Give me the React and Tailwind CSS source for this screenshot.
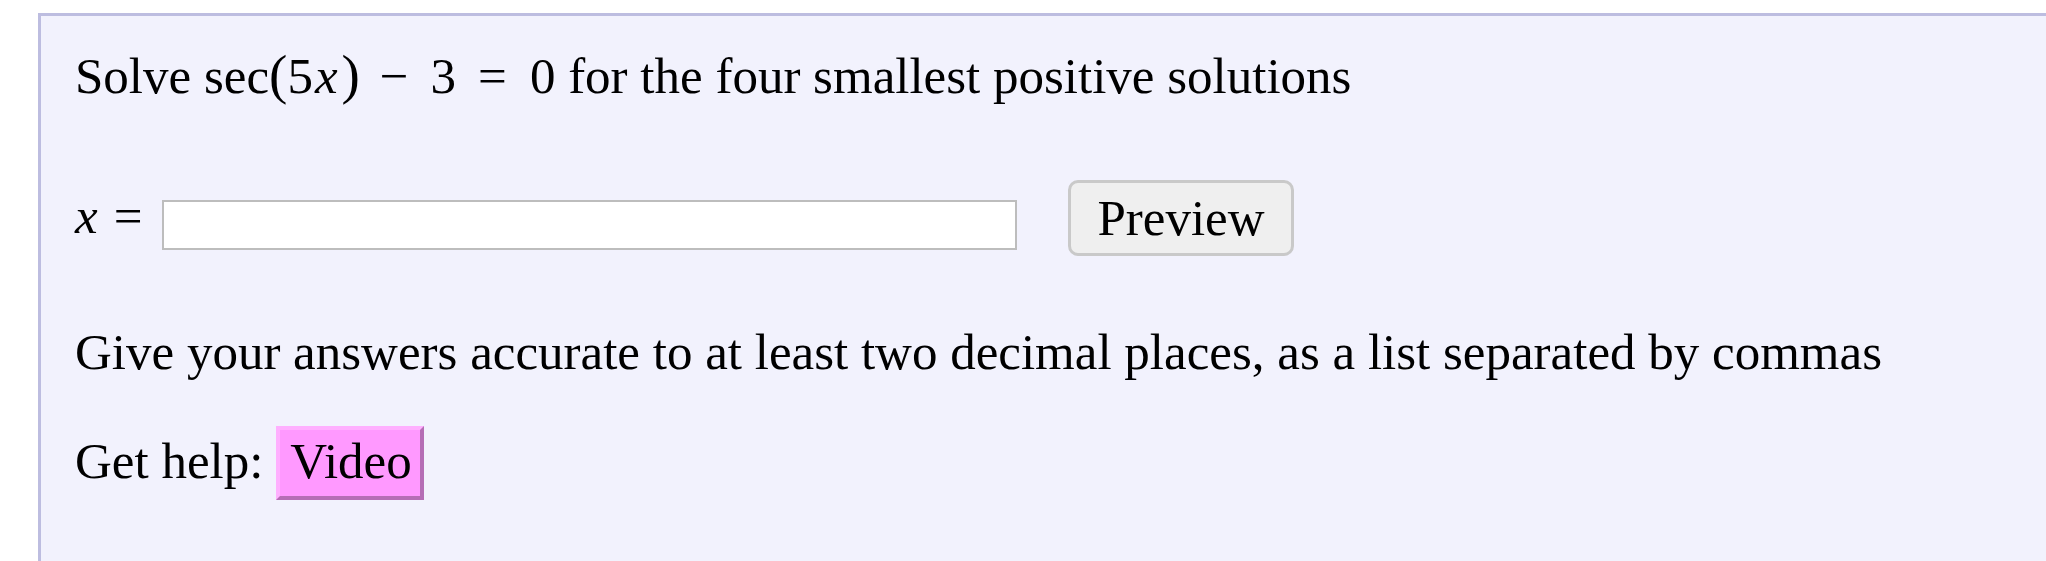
import React from 'react';

const MathExpr = () => (
    <span>
        <span>sec</span>
        <span className="text-[55px] leading-[0]">(</span>
        <span>5</span>
        <span className="italic pl-[2px] pr-[4px]">x</span>
        <span className="text-[55px] leading-[0]">)</span>
        <span className="ml-[20px]">−</span>
        <span className="ml-[22px]">3</span>
        <span className="ml-[22px]">=</span>
        <span className="ml-[23px]">0</span>
    </span>
);

const App = () => {
    return (
        <div className="h-[561px] overflow-hidden bg-white pl-[38px] pt-[13px] font-['Liberation_Serif',serif] text-[51px] leading-[58px] text-black">
            <div className="h-[600px] border-l-[3px] border-t-[3px] border-[#bdbde0] bg-[#f2f2fd] pl-[34px] pt-[31px]">
                <div className="whitespace-nowrap">
                    Solve <MathExpr /> for the four smallest positive solutions
                </div>

                <div className="mt-[75px] flex items-start">
                    <div className="mt-[7px] flex whitespace-nowrap">
                        <span className="italic">x</span>
                        <span className="ml-[16px]">=</span>
                    </div>
                    <input
                        type="text"
                        aria-label="answer"
                        className="ml-[20px] mt-[20px] h-[50px] w-[855px] border-2 border-[#bdbdbd] bg-white"
                    />
                    <button className="ml-[51px] rounded-[10px] border-[3px] border-[#c9c9c9] bg-[#efefef] px-[26px] py-[6px] leading-[58px]">
                        Preview
                    </button>
                </div>

                <div className="mt-[67px] whitespace-nowrap">
                    Give your answers accurate to at least two decimal places, as a list separated by commas
                </div>

                <div className="mt-[45px] whitespace-nowrap">
                    Get help:{' '}
                    <span className="inline-block border-4 border-t-[#ffb0ff] border-l-[#ffb0ff] border-r-[#b56db5] border-b-[#b56db5] bg-[#ff99ff] pl-[10px] pr-[8px] pt-[2px] pb-[6px] leading-[58px]">
                        Video
                    </span>
                </div>
            </div>
        </div>
    );
};

export default App;
